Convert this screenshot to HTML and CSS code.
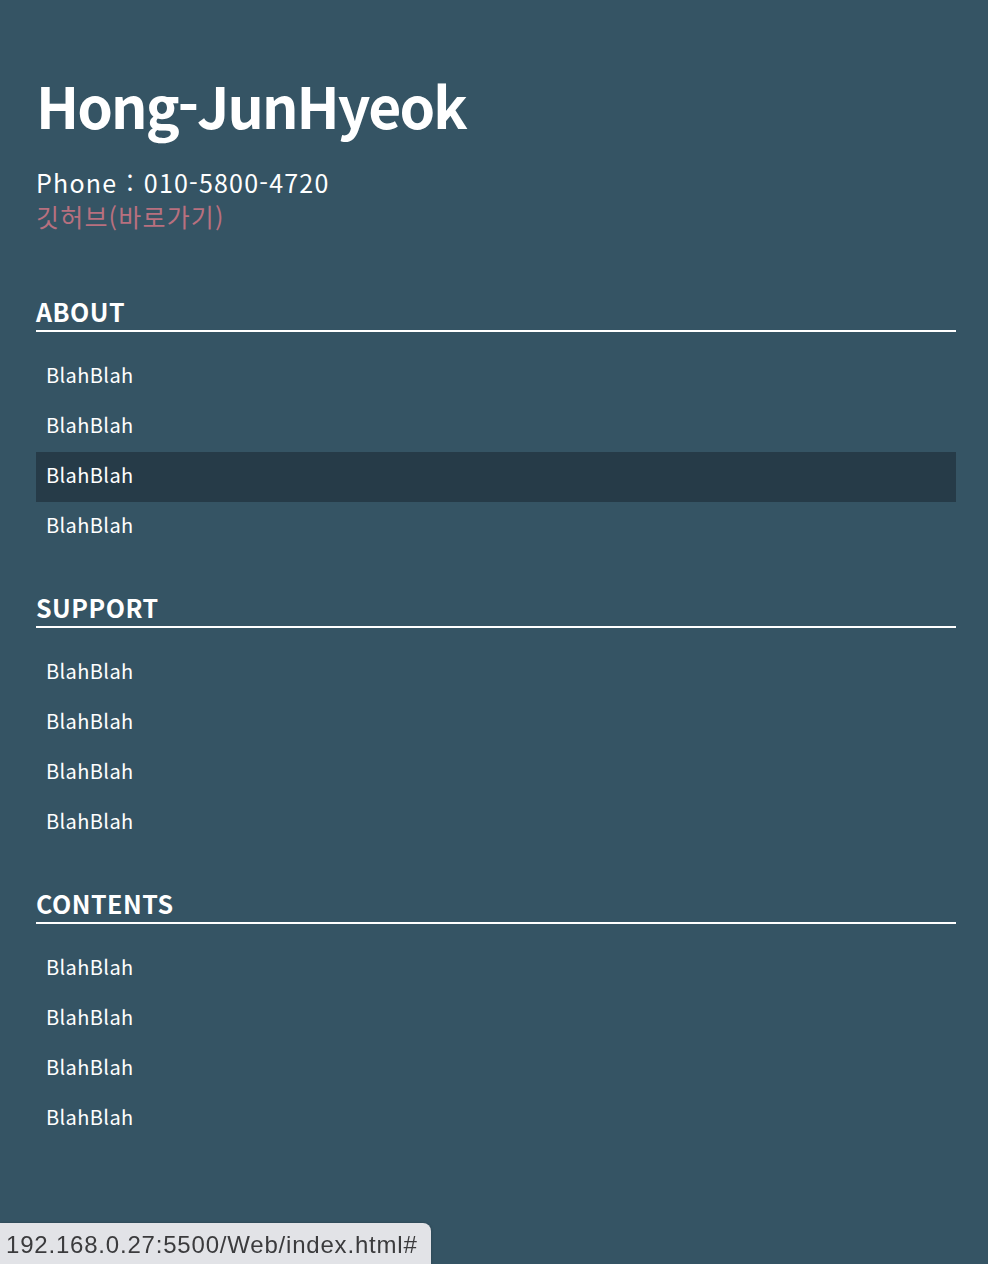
FILE: index.html
```html
<!DOCTYPE html>
<html lang="ko">
<head>
<meta charset="utf-8">
<title>Hong-JunHyeok</title>
<link rel="stylesheet" href="styles.css">
</head>
<body>
<div class="page">
  <header class="intro">
    <h1 class="name">Hong-JunHyeok</h1>
    <p class="phone">Phone : 010-5800-4720</p>
    <a class="github" href="#">깃허브(바로가기)</a>
  </header>

  <section class="block">
    <h2 class="block-title">ABOUT</h2>
    <ul class="menu">
      <li class="menu-item">BlahBlah</li>
      <li class="menu-item">BlahBlah</li>
      <li class="menu-item is-hover">BlahBlah</li>
      <li class="menu-item">BlahBlah</li>
    </ul>
  </section>

  <section class="block">
    <h2 class="block-title">SUPPORT</h2>
    <ul class="menu">
      <li class="menu-item">BlahBlah</li>
      <li class="menu-item">BlahBlah</li>
      <li class="menu-item">BlahBlah</li>
      <li class="menu-item">BlahBlah</li>
    </ul>
  </section>

  <section class="block">
    <h2 class="block-title">CONTENTS</h2>
    <ul class="menu">
      <li class="menu-item">BlahBlah</li>
      <li class="menu-item">BlahBlah</li>
      <li class="menu-item">BlahBlah</li>
      <li class="menu-item">BlahBlah</li>
    </ul>
  </section>
</div>
<div class="statusbar">192.168.0.27:5500/Web/index.html#</div>
</body>
</html>
```

FILE: styles.css
```css
html, body {
  margin: 0;
  padding: 0;
  background: #355464;
}
body {
  min-height: 1264px;
  color: #ffffff;
  font-family: "Noto Sans CJK KR", "Noto Sans", sans-serif;
}
.page {
  padding: 64px 32px 0 36px;
}
.intro {
  display: flex;
  flex-direction: column;
  align-items: flex-start;
}
.name {
  margin: 0;
  font-size: 57px;
  line-height: 80px;
  font-weight: 700;
  letter-spacing: -1.9px;
}
.phone {
  margin: 21px 0 0;
  font-size: 25px;
  line-height: 34px;
  letter-spacing: 1.2px;
  word-spacing: 1px;
}
.github {
  font-size: 25px;
  line-height: 34px;
  letter-spacing: 1.2px;
  color: #b8707f;
  text-decoration: none;
}
.block {
  margin-top: 41px;
}
.intro + .block {
  margin-top: 64px;
}
.block-title {
  margin: 0;
  font-size: 25px;
  line-height: 28px;
  font-weight: 700;
  letter-spacing: 0.5px;
  padding-bottom: 5px;
  border-bottom: 2px solid #ffffff;
}
.menu {
  list-style: none;
  margin: 20px 0 0;
  padding: 0;
}
.menu-item {
  height: 46px;
  line-height: 46px;
  padding: 0 0 4px 10px;
  font-size: 20px;
  letter-spacing: 0.4px;
}
.menu-item.is-hover {
  background: #263b48;
}
.statusbar {
  position: fixed;
  left: 0;
  bottom: 0;
  width: 425px;
  height: 41px;
  padding-left: 6px;
  background: #e2e3e7;
  border-top-right-radius: 8px;
  color: #3b3b3d;
  font-family: "Liberation Sans", Arial, sans-serif;
  font-size: 24px;
  letter-spacing: 0.8px;
  line-height: 43px;
  box-shadow: 0 0 3px rgba(0,0,0,0.25);
}
```
